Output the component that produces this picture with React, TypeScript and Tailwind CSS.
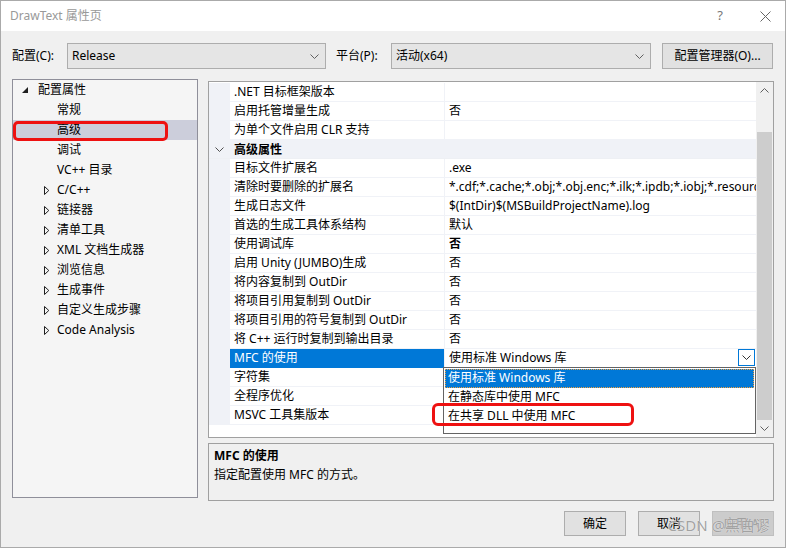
import React from 'react'

type TreeItem = { label: string; level: number; expander?: 'open' | 'closed'; selected?: boolean }

const TREE: TreeItem[] = [
  { label: '配置属性', level: 0, expander: 'open' },
  { label: '常规', level: 1 },
  { label: '高级', level: 1, selected: true },
  { label: '调试', level: 1 },
  { label: 'VC++ 目录', level: 1 },
  { label: 'C/C++', level: 1, expander: 'closed' },
  { label: '链接器', level: 1, expander: 'closed' },
  { label: '清单工具', level: 1, expander: 'closed' },
  { label: 'XML 文档生成器', level: 1, expander: 'closed' },
  { label: '浏览信息', level: 1, expander: 'closed' },
  { label: '生成事件', level: 1, expander: 'closed' },
  { label: '自定义生成步骤', level: 1, expander: 'closed' },
  { label: 'Code Analysis', level: 1, expander: 'closed' },
]

type Row = { name: string; value?: string; bold?: boolean; category?: boolean; selected?: boolean }

const ROWS: Row[] = [
  { name: '.NET 目标框架版本' },
  { name: '启用托管增量生成', value: '否' },
  { name: '为单个文件启用 CLR 支持' },
  { name: '高级属性', category: true },
  { name: '目标文件扩展名', value: '.exe' },
  { name: '清除时要删除的扩展名', value: '*.cdf;*.cache;*.obj;*.obj.enc;*.ilk;*.ipdb;*.iobj;*.resources;*.tlb;*.tli;*.tlh;*.tmp' },
  { name: '生成日志文件', value: '$(IntDir)$(MSBuildProjectName).log' },
  { name: '首选的生成工具体系结构', value: '默认' },
  { name: '使用调试库', value: '否', bold: true },
  { name: '启用 Unity (JUMBO)生成', value: '否' },
  { name: '将内容复制到 OutDir', value: '否' },
  { name: '将项目引用复制到 OutDir', value: '否' },
  { name: '将项目引用的符号复制到 OutDir', value: '否' },
  { name: '将 C++ 运行时复制到输出目录', value: '否' },
  { name: 'MFC 的使用', value: '使用标准 Windows 库', selected: true },
  { name: '字符集' },
  { name: '全程序优化' },
  { name: 'MSVC 工具集版本' },
]

const OPTIONS = ['使用标准 Windows 库', '在静态库中使用 MFC', '在共享 DLL 中使用 MFC']

function Chevron({ up = false, color = '#606060' }: { up?: boolean; color?: string }) {
  return (
    <svg width="9" height="5" viewBox="0 0 9 5">
      <polyline
        points={up ? '0.5,4.5 4.5,0.5 8.5,4.5' : '0.5,0.5 4.5,4.5 8.5,0.5'}
        fill="none"
        stroke={color}
        strokeWidth="1"
      />
    </svg>
  )
}

function Combo({ text, width }: { text: string; width: string }) {
  return (
    <div className={`${width} h-[26px] bg-[#e5e5e5] border border-[#adadad] flex items-center pl-[4px] pr-[6px]`}>
      <span className="flex-1">{text}</span>
      <Chevron />
    </div>
  )
}

function Button({ label, disabled = false }: { label: string; disabled?: boolean }) {
  return (
    <div
      className={`w-[62px] h-[25px] border flex items-center justify-center ${
        disabled ? 'bg-[#cccccc] border-[#bfbfbf] text-[#a0a0a0]' : 'bg-[#e1e1e1] border-[#adadad] text-black'
      }`}
    >
      {label}
    </div>
  )
}

export default function App() {
  return (
    <div className="w-[786px] h-[548px] border border-[#aaaaaa] bg-[#f0f0f0] flex flex-col overflow-hidden text-[12px] text-black font-['Noto_Sans','Noto_Sans_CJK_SC',sans-serif]">
      {/* Title bar */}
      <div className="h-[30px] shrink-0 bg-white flex items-center pl-[9px]">
        <span className="text-[#999999] text-[12px]">DrawText 属性页</span>
        <span className="ml-auto text-[#777777] text-[13px] mr-[37px]">?</span>
        <svg width="11" height="11" viewBox="0 0 11 11" className="mr-[14px]">
          <path d="M0.5 0.5 L10.5 10.5 M10.5 0.5 L0.5 10.5" stroke="#666666" strokeWidth="1" />
        </svg>
      </div>

      {/* Config row */}
      <div className="flex items-center h-[26px] mt-[12px] pl-[11px] shrink-0">
        <span className="w-[55px]">配置(C):</span>
        <Combo text="Release" width="w-[259px]" />
        <span className="ml-[10px] w-[55px]">平台(P):</span>
        <Combo text="活动(x64)" width="w-[260px]" />
        <div className="ml-[11px] w-[111px] h-[26px] bg-[#e1e1e1] border border-[#adadad] flex items-center justify-center">
          配置管理器(O)...
        </div>
      </div>

      {/* Main */}
      <div className="flex mt-[10px] pl-[11px] shrink-0">
        {/* Tree */}
        <div className="w-[186px] h-[419px] border border-[#8f8f9a] bg-[#f5f5f5]">
          {TREE.map(item => (
            <div
              key={item.label}
              className={`relative h-[20px] flex items-center ${item.level === 0 ? 'pl-[9px]' : 'pl-[28px]'} ${
                item.selected ? 'bg-[#cccedb]' : ''
              }`}
            >
              <span className="w-[16px] h-[20px] flex items-center">
                {item.expander === 'open' && (
                  <svg width="7" height="7" viewBox="0 0 7 7" className="mt-[1px]">
                    <polygon points="6,0 6,6 0,6" fill="#1e1e1e" />
                  </svg>
                )}
                {item.expander === 'closed' && (
                  <svg width="6" height="9" viewBox="0 0 6 9" className="ml-[3px]">
                    <polygon points="0.5,0.5 4.8,4.5 0.5,8.5" fill="none" stroke="#1e1e1e" strokeWidth="1" />
                  </svg>
                )}
              </span>
              <span className="leading-[20px] whitespace-nowrap">{item.label}</span>
              {item.selected && (
                <div className="absolute left-0 top-[1px] w-[155px] h-[20px] border-[3px] border-[#ee1111] rounded-[5px]" />
              )}
            </div>
          ))}
        </div>

        {/* Right column */}
        <div className="ml-[10px] w-[566px] pt-[2px] flex flex-col">
          {/* Property grid */}
          <div className="h-[357px] border border-[#a0a0a0] bg-white flex">
            <div className="relative flex-1 min-w-0 pt-[1px] bg-white">
              {ROWS.map(row =>
                row.category ? (
                  <div key={row.name} className="h-[19px] flex bg-[#f0f2f7] border-b border-[#eef0f4]">
                    <span className="w-[21px] flex items-center justify-center">
                      <Chevron color="#505050" />
                    </span>
                    <span className="pl-[4px] font-bold leading-[19px]">{row.name}</span>
                  </div>
                ) : (
                  <div key={row.name} className="h-[19px] flex">
                    <span className="w-[21px] shrink-0 bg-[#f0f2f7]" />
                    <span
                      className={`w-[214px] shrink-0 pl-[4px] leading-[18px] border-b whitespace-nowrap overflow-hidden ${
                        row.selected ? 'bg-[#0078d7] text-white border-[#0078d7]' : 'border-[#f0f2f7]'
                      }`}
                    >
                      {row.name}
                    </span>
                    <div
                      className={`flex-1 min-w-0 flex items-start pl-[4px] border-b border-l border-[#f0f2f7] ${
                        row.bold ? 'font-bold' : ''
                      }`}
                    >
                      <span className="flex-1 min-w-0 leading-[18px] whitespace-nowrap overflow-hidden">{row.value}</span>
                      {row.selected && (
                        <span className="shrink-0 mr-[1px] w-[17px] h-[17px] border border-[#0078d7] bg-white flex items-center justify-center">
                          <Chevron color="#333333" />
                        </span>
                      )}
                    </div>
                  </div>
                )
              )}

              {/* Dropdown list */}
              <div className="absolute left-[234px] top-[285px] w-[313px] h-[67px] border border-[#646464] bg-white pt-[1px] px-[1px]">
                {OPTIONS.map((opt, i) => (
                  <div
                    key={opt}
                    className={`h-[19px] pl-[3px] leading-[18px] whitespace-nowrap ${
                      i === 0 ? 'bg-[#0078d7] text-white outline outline-1 outline-dotted outline-[#f0a040] -outline-offset-1' : ''
                    }`}
                  >
                    {opt}
                  </div>
                ))}
              </div>

              {/* Annotation */}
              <div className="absolute left-[223px] top-[321px] w-[202px] h-[23px] border-[3px] border-[#ee1111] rounded-[6px]" />
            </div>

            {/* Scrollbar */}
            <div className="w-[17px] shrink-0 bg-[#f0f0f0] flex flex-col">
              <div className="h-[17px] flex items-center justify-center">
                <Chevron up />
              </div>
              <div className="flex-1 pt-[33px] flex flex-col px-[1px]">
                <div className="flex-1 bg-[#cdcdcd]" />
              </div>
              <div className="h-[17px] flex items-center justify-center">
                <Chevron />
              </div>
            </div>
          </div>

          {/* Description */}
          <div className="mt-[5px] h-[58px] border border-[#a0a0a0] bg-[#f0f0f0] pl-[5px] pt-[2px]">
            <div className="font-bold leading-[19px]">MFC 的使用</div>
            <div className="leading-[19px]">指定配置使用 MFC 的方式。</div>
          </div>
        </div>
      </div>

      {/* Buttons */}
      <div className="relative flex justify-end gap-[12px] mt-[10px] pr-[11px]">
        <Button label="确定" />
        <Button label="取消" />
        <Button label="应用(A)" disabled />
        <span className="absolute right-[15px] top-[4px] text-[15px] leading-[20px] text-[#a2a2a2] [text-shadow:0_0_1px_#ffffff] whitespace-nowrap">
          CSDN @黑白谬
        </span>
      </div>
    </div>
  )
}
